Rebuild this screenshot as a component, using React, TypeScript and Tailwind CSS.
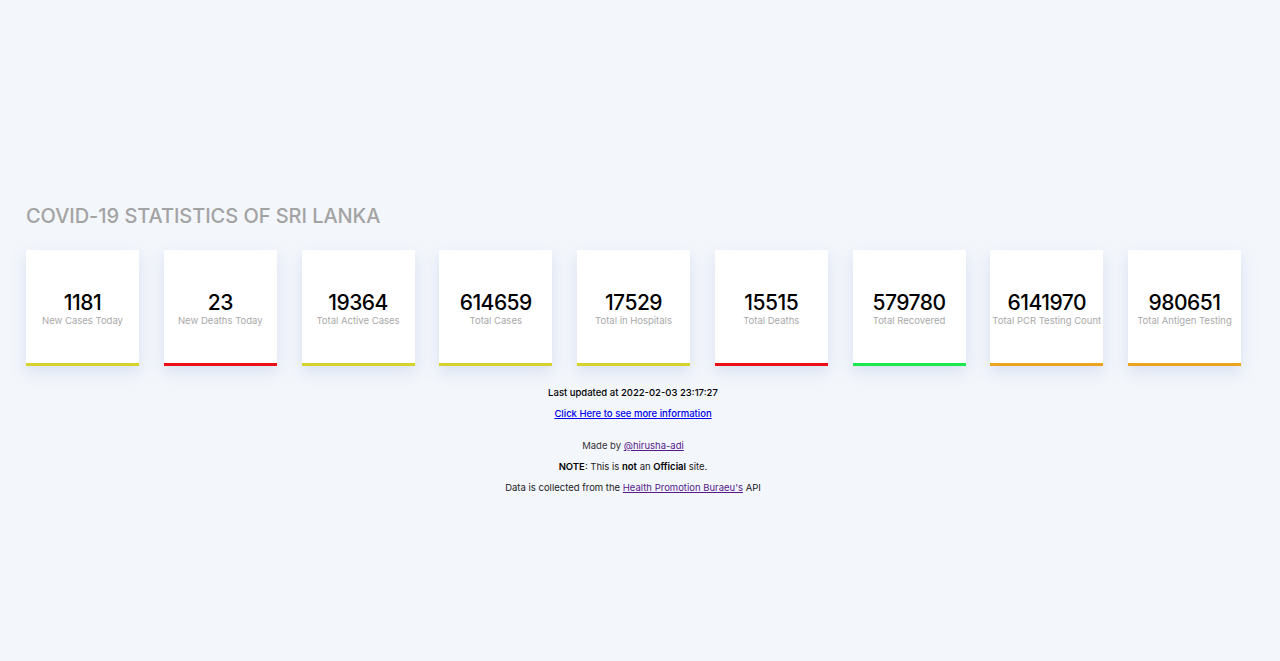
// ============================================================
// COVID-19 statistics board
// ============================================================

const stats = [
  { value: '1181', label: 'New Cases Today', bar: 'border-[#d6d12c]' },
  { value: '23', label: 'New Deaths Today', bar: 'border-[#ec1016]' },
  { value: '19364', label: 'Total Active Cases', bar: 'border-[#d6d12c]' },
  { value: '614659', label: 'Total Cases', bar: 'border-[#d6d12c]' },
  { value: '17529', label: 'Total in Hospitals', bar: 'border-[#d6d12c]' },
  { value: '15515', label: 'Total Deaths', bar: 'border-[#ec1016]' },
  { value: '579780', label: 'Total Recovered', bar: 'border-[#1be84d]' },
  { value: '6141970', label: 'Total PCR Testing Count', bar: 'border-[#eba420]' },
  { value: '980651', label: 'Total Antigen Testing', bar: 'border-[#eba420]' },
]

function StatCard({ value, label, bar }: { value: string; label: string; bar: string }) {
  return (
    <div
      className={`flex h-[116px] w-[113px] flex-col items-center justify-center border-b-[3px] bg-white pt-[4px] shadow-[0_6px_14px_rgba(170,185,225,0.35)] ${bar}`}
    >
      <div className="text-[21px] font-medium leading-none tracking-[-0.5px] text-black">{value}</div>
      <div className="mt-[3px] whitespace-nowrap text-[9.5px] leading-none text-[#a9a9a9]">{label}</div>
    </div>
  )
}

export default function App() {
  return (
    <div
      className="min-h-[661px] w-full bg-[#f3f6fb] pt-[204px]"
      style={{ fontFamily: 'Inter, "Open Sans", sans-serif' }}
    >
      <h1 className="ml-[26px] text-[20px] font-medium leading-[24px] tracking-[-0.05px] text-[#a3a3a3]">
        COVID-19 STATISTICS OF SRI LANKA
      </h1>

      {/* ── cards ─────────────────────────────────────── */}
      <div className="ml-[26px] mt-[22px] flex w-[1215px] justify-between">
        {stats.map((s) => (
          <StatCard key={s.label} {...s} />
        ))}
      </div>

      {/* ── footer text ───────────────────────────────── */}
      <div className="mt-[21px] flex w-[1266px] flex-col items-center text-[9.5px] leading-[12px] text-black">
        <p className="font-medium">Last updated at 2022-02-03 23:17:27</p>
        <a href="#" className="mt-[9px] font-medium text-[#0000ee] underline">
          Click Here to see more information
        </a>
        <p className="mt-[20px] text-[#333]">
          Made by <a href="#" className="text-[#551a8b] underline">@hirusha-adi</a>
        </p>
        <p className="mt-[9px] text-[#222]">
          <span className="font-semibold text-black">NOTE</span>: This is{' '}
          <span className="font-semibold text-black">not</span> an{' '}
          <span className="font-semibold text-black">Official</span> site.
        </p>
        <p className="mt-[9px] text-[#222]">
          Data is collected from the{' '}
          <a href="#" className="text-[#551a8b] underline">Health Promotion Buraeu's</a> API
        </p>
      </div>
    </div>
  )
}
